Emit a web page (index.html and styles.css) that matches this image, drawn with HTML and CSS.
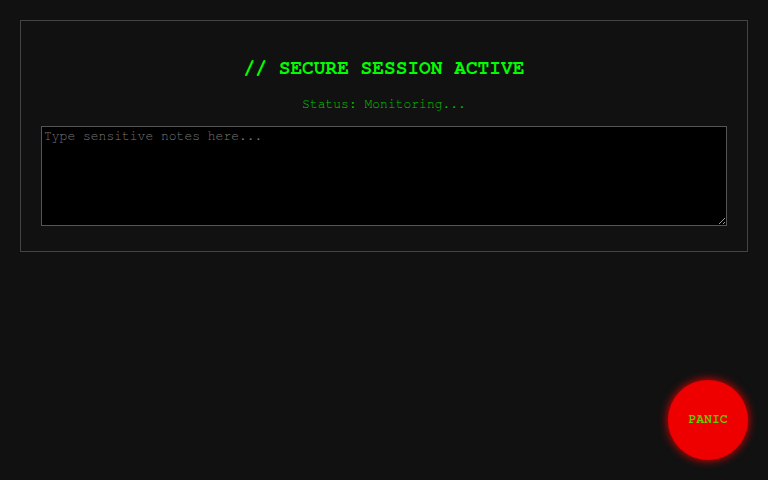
FILE: index.html
```html
<!DOCTYPE html>
<html lang="en">
  <head>
    <meta charset="UTF-8" />
    <meta name="viewport" content="width=device-width, initial-scale=1.0" />
    <title>Secure Session</title>
    <link rel="stylesheet" href="styles.css">
  </head>
  <body>
    <div class="terminal">
      <h2>// SECURE SESSION ACTIVE</h2>
      <p class="status">Status: Monitoring...</p>
      <textarea class="notes" placeholder="Type sensitive notes here..."></textarea>
    </div>
    <button class="panic-btn">PANIC</button>
  </body>
</html>
```

FILE: styles.css
```css
body {
  font-family: "Nimbus Mono PS", "FreeMono", "Courier", "Liberation Mono", monospace;
  background-color: #111111;
  color: #00ff00;
  margin: 0;
  padding: 20px;
}

.terminal {
  border: 1px solid #444;
  padding: 20px;
  text-align: center;
}

h2 {
  font-size: 19.5px;
  margin: 17px 0 20px;
  color: #00ff00;
}

.status {
  font-size: 13px;
  color: #00c800;
  margin: 0 0 15px;
}

.notes {
  display: block;
  box-sizing: border-box;
  width: 100%;
  height: 100px;
  margin-bottom: 5px;
  padding: 3px 2px 2px;
  background-color: #000;
  color: #00ff00;
  border: 1px solid #555;
  font-family: "Nimbus Mono PS", "FreeMono", "Courier", "Liberation Mono", monospace;
  font-size: 13px;
}

.notes::placeholder {
  color: #777;
}

.panic-btn {
  position: fixed;
  right: 20px;
  bottom: 20px;
  width: 80px;
  height: 80px;
  padding: 0 0 2px;
  border: none;
  border-radius: 50%;
  background-color: #ee0000;
  color: #66cc00;
  font-family: "Nimbus Mono PS", "FreeMono", "Courier", "Liberation Mono", monospace;
  font-weight: bold;
  font-size: 13px;
  box-shadow: 0 0 10px #ff0000;
  cursor: pointer;
}
```
